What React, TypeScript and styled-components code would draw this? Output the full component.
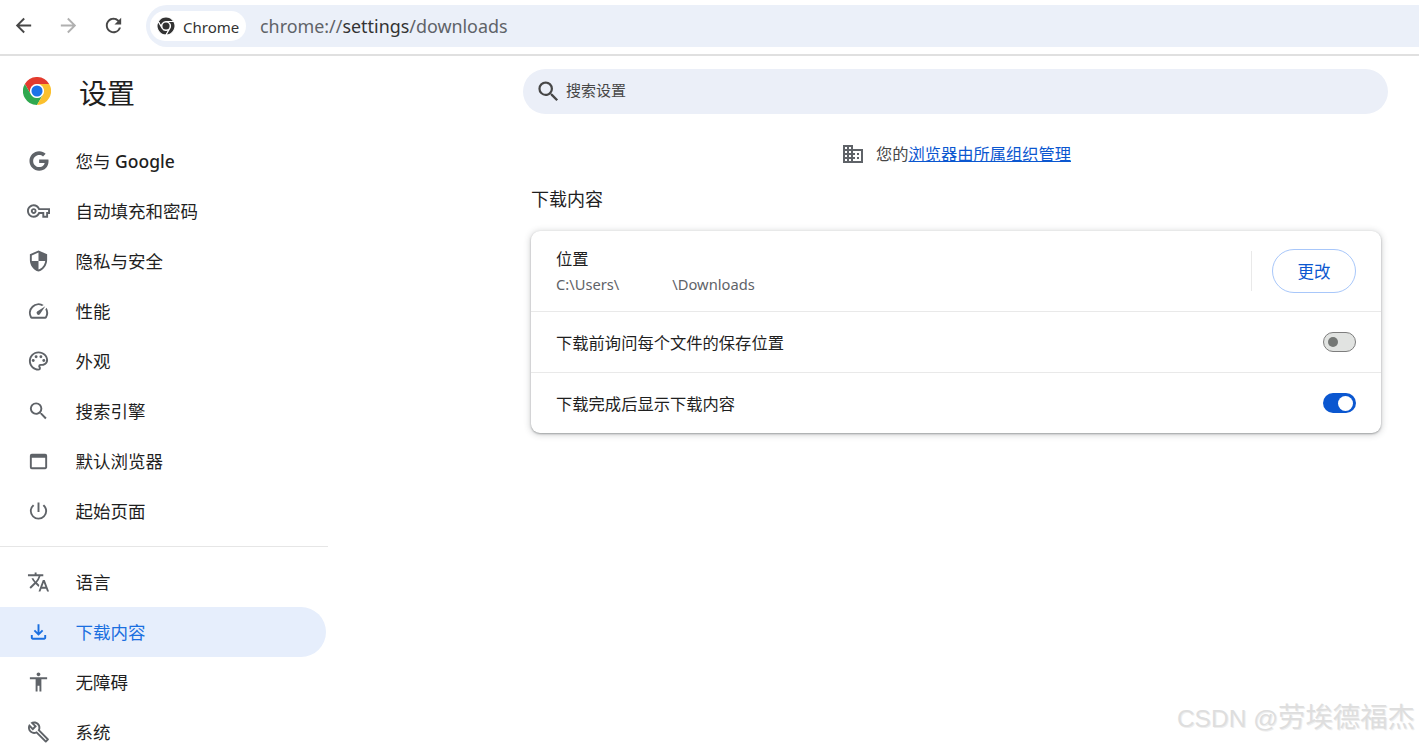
import React from 'react';
import styled, { createGlobalStyle } from 'styled-components';
import { FaGoogle } from 'react-icons/fa';
import {
  MdArrowBack,
  MdArrowForward,
  MdRefresh,
  MdOutlineVpnKey,
  MdSecurity,
  MdOutlineSpeed,
  MdOutlinePalette,
  MdSearch,
  MdOutlineWebAsset,
  MdPowerSettingsNew,
  MdTranslate,
  MdOutlineFileDownload,
  MdAccessibility,
  MdOutlineBuild,
  MdDomain,
} from 'react-icons/md';

const GlobalStyle = createGlobalStyle`
  html, body {
    margin: 0;
    padding: 0;
    height: 100%;
    background: #fff;
  }
  body {
    font-family: "Noto Sans", "Noto Sans CJK SC", sans-serif;
    color: #1f1f1f;
  }
`;

const Page = styled.div`
  position: relative;
  width: 1419px;
  height: 744px;
  overflow: hidden;
  display: flex;
  flex-direction: column;
`;

const Toolbar = styled.header`
  height: 54px;
  flex: none;
  display: flex;
  align-items: center;
  border-bottom: 2px solid #e0e0e0;
  padding-left: 11px;
`;

const NavButton = styled.div<{ $dim?: boolean }>`
  width: 24px;
  height: 24px;
  margin-right: 21px;
  margin-top: -4px;
  display: flex;
  align-items: center;
  justify-content: center;
  font-size: 23px;
  color: ${(p) => (p.$dim ? '#b0b0b0' : '#474747')};
`;

const Omnibox = styled.div`
  flex: 1;
  height: 42px;
  margin-left: 0;
  margin-top: -2px;
  padding-left: 4px;
  display: flex;
  align-items: center;
  background: #ebf0f9;
  border-radius: 21px 0 0 21px;
`;

const Chip = styled.div`
  height: 30px;
  width: 96px;
  box-sizing: border-box;
  padding-left: 7px;
  display: flex;
  align-items: center;
  gap: 8px;
  background: #fff;
  border-radius: 15px;
  font-size: 15px;
  color: #333;
`;

const ChipLabel = styled.span`
  margin-top: 2px;
`;

const Url = styled.div`
  margin-left: 14px;
  font-size: 17.9px;
  color: #5f6368;
`;

const UrlHost = styled.span`
  color: #333;
`;

const Body = styled.div`
  flex: 1;
  display: flex;
  min-height: 0;
`;

const Sidebar = styled.aside`
  width: 328px;
  flex: none;
`;

const Brand = styled.div`
  height: 80px;
  box-sizing: border-box;
  padding: 0 0 6px 23px;
  display: flex;
  align-items: center;
  gap: 28px;
`;

const BrandLogo = styled.span`
  display: flex;
  margin-bottom: 4px;
`;

const Title = styled.h1`
  margin: 0;
  font-size: 28px;
  font-weight: 400;
  line-height: 36px;
`;

const NavItem = styled.div<{ $active?: boolean }>`
  height: 50px;
  margin-right: 2px;
  padding-left: 27px;
  display: flex;
  align-items: center;
  gap: 25.5px;
  font-size: 17.5px;
  border-radius: 0 25px 25px 0;
  color: ${(p) => (p.$active ? '#1a6fe0' : '#1f1f1f')};
  background: ${(p) => (p.$active ? '#e6eefc' : 'transparent')};
`;

const NavIcon = styled.span<{ $active?: boolean }>`
  width: 23px;
  height: 22px;
  flex: none;
  display: flex;
  align-items: center;
  justify-content: center;
  font-size: 24px;
  color: ${(p) => (p.$active ? '#1a6fe0' : '#5f6368')};
`;

const NavLabel = styled.span`
  margin-top: -2px;
`;

const GoogleWord = styled.span`
  font-weight: 500;
`;

const NavDivider = styled.hr`
  margin: 10px 0;
  border: 0;
  border-top: 1px solid #e6e6e6;
`;

const Main = styled.main`
  flex: 1;
  padding: 13px 31px 0 195px;
`;

const SearchBar = styled.div`
  height: 45px;
  padding-left: 12px;
  display: flex;
  align-items: center;
  gap: 4px;
  background: #ebeff8;
  border-radius: 23px;
  font-size: 15px;
  color: #474747;
`;

const SearchIcon = styled.span`
  display: flex;
  font-size: 27px;
  color: #474747;
`;

const SearchLabel = styled.span`
  margin-top: -4px;
`;

const Managed = styled.div`
  margin: 30px 7px 0 8px;
  height: 20px;
  display: flex;
  align-items: center;
  justify-content: center;
  font-size: 16.25px;
  color: #474747;
`;

const ManagedIcon = styled.span`
  display: flex;
  margin-right: 11px;
  font-size: 24px;
  color: #5f6368;
`;

const ManagedText = styled.span`
  margin-top: -2px;
`;

const ManagedLink = styled.a`
  color: #0b57d0;
  text-decoration: underline;
`;

const Heading = styled.h2`
  margin: 23px 0 20px 8px;
  font-size: 18px;
  font-weight: 400;
  line-height: 24px;
`;

const Card = styled.section`
  margin: 0 7px 0 8px;
  background: #fff;
  border-radius: 9px;
  box-shadow: 0 1px 2px rgba(60, 64, 67, 0.4), 0 1px 6px 1px rgba(60, 64, 67, 0.22);
`;

const Row = styled.div<{ $tall?: boolean }>`
  height: ${(p) => (p.$tall ? '80px' : '60px')};
  padding: 0 25px;
  display: flex;
  align-items: center;
  font-size: 16.3px;
  & + & {
    border-top: 1px solid #e9e9e9;
  }
`;

const RowText = styled.div`
  flex: 1;
`;

const RowLabel = styled.div`
  line-height: 22px;
`;

const PathLine = styled.div`
  display: flex;
  margin-top: 3px;
  line-height: 22px;
  font-size: 14.7px;
  color: #5f6368;
`;

const PathTail = styled.span`
  margin-left: 53px;
`;

const RowSeparator = styled.div`
  width: 1px;
  height: 40px;
  margin-right: 20px;
  background: #e9e9e9;
`;

const OutlineButton = styled.div`
  width: 84px;
  height: 44px;
  box-sizing: border-box;
  display: flex;
  align-items: center;
  justify-content: center;
  border: 1px solid #a8c7fa;
  border-radius: 22px;
  font-size: 16.5px;
  color: #0b57d0;
`;

const Toggle = styled.div<{ $on?: boolean }>`
  width: 33px;
  height: 20px;
  box-sizing: border-box;
  display: flex;
  align-items: center;
  justify-content: ${(p) => (p.$on ? 'flex-end' : 'flex-start')};
  padding: 0 3px 0 ${(p) => (p.$on ? '3px' : '4px')};
  border-radius: 10px;
  border: ${(p) => (p.$on ? '0' : '1px solid #7d7d7d')};
  background: ${(p) => (p.$on ? '#0b57d0' : '#e1e3e1')};
`;

const Knob = styled.span<{ $on?: boolean }>`
  width: ${(p) => (p.$on ? '15px' : '10px')};
  height: ${(p) => (p.$on ? '15px' : '10px')};
  border-radius: 50%;
  background: ${(p) => (p.$on ? '#fff' : '#747775')};
`;

const Watermark = styled.div`
  position: absolute;
  right: 4px;
  bottom: 9px;
  font-family: "Liberation Sans", "Noto Sans CJK SC", sans-serif;
  font-size: 27.4px;
  line-height: 32px;
  color: #dedede;
  text-shadow: 1px 1px 0 #eeeeee;
  white-space: nowrap;
`;

const WatermarkHandle = styled.span`
  font-size: 24.5px;
`;

const ChromeMark = ({
  size,
  colors,
  eye,
  seam = 'none',
}: {
  size: number;
  colors: [string, string, string];
  eye: string;
  seam?: string;
}) => (
  <svg width={size} height={size} viewBox="0 0 48 48" style={{ flex: 'none' }}>
    <path d="M3.2 12A24 24 0 0 1 44.8 12H24A12 12 0 0 0 13.6 30Z" fill={colors[0]} stroke={seam} strokeWidth="3" />
    <path d="M3.2 12L13.6 30A12 12 0 0 0 34.4 30L24 48A24 24 0 0 1 3.2 12Z" fill={colors[1]} stroke={seam} strokeWidth="3" />
    <path d="M44.8 12A24 24 0 0 1 24 48L34.4 30A12 12 0 0 0 24 12Z" fill={colors[2]} stroke={seam} strokeWidth="3" />
    <circle cx="24" cy="24" r="11.5" fill="#fff" />
    <circle cx="24" cy="24" r="9.5" fill={eye} />
  </svg>
);

const topItems = [
  { icon: <FaGoogle size={20} />, label: <>您与 <GoogleWord>Google</GoogleWord></> },
  { icon: <MdOutlineVpnKey />, label: '自动填充和密码' },
  { icon: <MdSecurity />, label: '隐私与安全' },
  { icon: <MdOutlineSpeed />, label: '性能' },
  { icon: <MdOutlinePalette />, label: '外观' },
  { icon: <MdSearch />, label: '搜索引擎' },
  { icon: <MdOutlineWebAsset size={27} />, label: '默认浏览器' },
  { icon: <MdPowerSettingsNew />, label: '起始页面' },
];

const bottomItems = [
  { icon: <MdTranslate size={26} />, label: '语言' },
  { icon: <MdOutlineFileDownload />, label: '下载内容', active: true },
  { icon: <MdAccessibility size={26} />, label: '无障碍' },
  { icon: <MdOutlineBuild />, label: '系统' },
];

export default function App() {
  return (
    <Page>
      <GlobalStyle />
      <Toolbar>
        <NavButton><MdArrowBack /></NavButton>
        <NavButton $dim><MdArrowForward /></NavButton>
        <NavButton><MdRefresh /></NavButton>
        <Omnibox>
          <Chip>
            <ChromeMark size={18} colors={['#333', '#333', '#333']} eye="#333" seam="#fff" />
            <ChipLabel>Chrome</ChipLabel>
          </Chip>
          <Url>
            chrome://<UrlHost>settings</UrlHost>/downloads
          </Url>
        </Omnibox>
      </Toolbar>
      <Body>
        <Sidebar>
          <Brand>
            <BrandLogo>
              <ChromeMark size={28} colors={['#e33b2e', '#2fa84f', '#fbc02d']} eye="#1a73e8" />
            </BrandLogo>
            <Title>设置</Title>
          </Brand>
          <nav>
            {topItems.map((item, i) => (
              <NavItem key={i}>
                <NavIcon>{item.icon}</NavIcon>
                <NavLabel>{item.label}</NavLabel>
              </NavItem>
            ))}
            <NavDivider />
            {bottomItems.map((item, i) => (
              <NavItem key={i} $active={item.active}>
                <NavIcon $active={item.active}>{item.icon}</NavIcon>
                <NavLabel>{item.label}</NavLabel>
              </NavItem>
            ))}
          </nav>
        </Sidebar>
        <Main>
          <SearchBar>
            <SearchIcon><MdSearch /></SearchIcon>
            <SearchLabel>搜索设置</SearchLabel>
          </SearchBar>
          <Managed>
            <ManagedIcon><MdDomain /></ManagedIcon>
            <ManagedText>
              您的<ManagedLink>浏览器由所属组织管理</ManagedLink>
            </ManagedText>
          </Managed>
          <Heading>下载内容</Heading>
          <Card>
            <Row $tall>
              <RowText>
                <RowLabel>位置</RowLabel>
                <PathLine>
                  <span>C:\Users\</span>
                  <PathTail>\Downloads</PathTail>
                </PathLine>
              </RowText>
              <RowSeparator />
              <OutlineButton>更改</OutlineButton>
            </Row>
            <Row>
              <RowText>下载前询问每个文件的保存位置</RowText>
              <Toggle><Knob /></Toggle>
            </Row>
            <Row>
              <RowText>下载完成后显示下载内容</RowText>
              <Toggle $on><Knob $on /></Toggle>
            </Row>
          </Card>
        </Main>
      </Body>
      <Watermark><WatermarkHandle>CSDN @</WatermarkHandle>劳埃德福杰</Watermark>
    </Page>
  );
}
